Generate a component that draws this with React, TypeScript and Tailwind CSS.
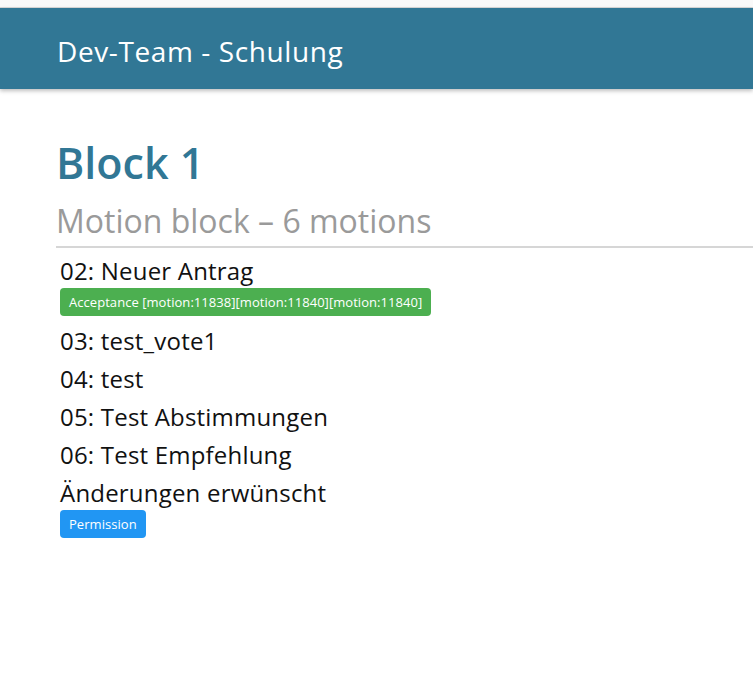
const motions = [
  { title: "02: Neuer Antrag", badge: { text: "Acceptance [motion:11838][motion:11840][motion:11840]", color: "bg-[#4caf50]" } },
  { title: "03: test_vote1" },
  { title: "04: test" },
  { title: "05: Test Abstimmungen" },
  { title: "06: Test Empfehlung" },
  { title: "Änderungen erwünscht", badge: { text: "Permission", color: "bg-[#2196f3]" } },
];

export default function App() {
  return (
    <div className="min-h-screen bg-white font-['Open_Sans',sans-serif]">
      <div className="h-[8px] bg-[#f9f9f9] border-b border-[#d8d8d8]" />
      <header className="h-[81px] bg-[#317795] flex items-center px-[57px] shadow-[0_2px_4px_rgba(0,0,0,0.25)]">
        <h1 className="text-white text-[28px] tracking-[0.6px] pt-[4px]">Dev-Team - Schulung</h1>
      </header>

      <main className="pl-[56px] pt-[44px]">
        <h2 className="text-[#317795] text-[43px] font-semibold leading-[60px]">Block 1</h2>
        <div className="text-[#9a9a9a] text-[32px] leading-[44px] pt-[6px] pb-[3px] border-b-2 border-[#d6d6d6]">
          Motion block – 6 motions
        </div>

        <ul className="pl-[4px] pt-[6px]">
          {motions.map((m) => (
            <li key={m.title} className="mb-[4px]">
              <div className="text-[#111] text-[24px] tracking-[0.2px] leading-[34px]">{m.title}</div>
              {m.badge && (
                <span
                  className={`${m.badge.color} inline-block text-white text-[13px] tracking-[0.05px] leading-[28px] px-[9px] rounded-[4px] mb-[4px]`}
                >
                  {m.badge.text}
                </span>
              )}
            </li>
          ))}
        </ul>
      </main>
    </div>
  );
}
